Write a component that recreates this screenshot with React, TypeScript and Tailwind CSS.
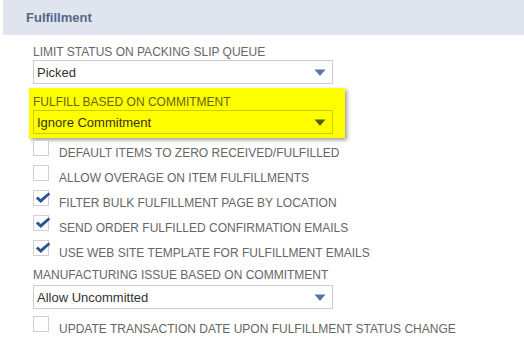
import React from 'react';

const font = { fontFamily: '"Liberation Sans", Arial, sans-serif' };

const checks = [
  { label: 'DEFAULT ITEMS TO ZERO RECEIVED/FULFILLED', checked: false },
  { label: 'ALLOW OVERAGE ON ITEM FULFILLMENTS', checked: false },
  { label: 'FILTER BULK FULFILLMENT PAGE BY LOCATION', checked: true },
  { label: 'SEND ORDER FULFILLED CONFIRMATION EMAILS', checked: true },
  { label: 'USE WEB SITE TEMPLATE FOR FULFILLMENT EMAILS', checked: true },
];

const Arrow: React.FC<{ color: string }> = ({ color }) => (
  <svg width="12" height="7" viewBox="0 0 12 7">
    <path d="M0.5 0.5 L11.5 0.5 L6.6 6.2 Q6 6.8 5.4 6.2 Z" fill={color} />
  </svg>
);

const Select: React.FC<{ value: string; highlight?: boolean }> = ({ value, highlight }) => (
  <div
    className={`flex h-[24px] w-[300px] items-center justify-between border pl-[3px] pr-[6px] text-[13px] leading-[15px] ${
      highlight ? 'border-[#cccc00] text-[#333300]' : 'border-[#cccccc] bg-white text-[#333333]'
    }`}
  >
    <span>{value}</span>
    <Arrow color={highlight ? '#4f6000' : '#5b7398'} />
  </div>
);

const Checkbox: React.FC<{ label: string; checked: boolean }> = ({ label, checked }) => (
  <div className="flex h-[25px] items-start">
    <div className="relative h-[16px] w-[16px] border border-[#d0d0d0] bg-white">
      {checked && (
        <svg className="absolute left-[1px] top-[1px]" width="16" height="12" viewBox="0 0 16 12">
          <path d="M0.8 6.4 L3 4.4 L5.6 7 L13.4 0.4 L15.4 2.2 L5.8 11 Z" fill="#2a5699" />
        </svg>
      )}
    </div>
    <span className="ml-[10px] pt-[6px] text-[12px] leading-[14px] text-[#666666]">{label}</span>
  </div>
);

export default function App() {
  return (
    <div className="h-[342px] w-[524px] overflow-hidden bg-white" style={font}>
      <div className="ml-[3px] flex h-[35px] items-center bg-[#dfe4ee] pl-[23px] pt-[1px]">
        <span className="text-[13px] font-bold text-[#56668a]">Fulfillment</span>
      </div>

      <div className="pl-[33px]">
        <div className="mt-[10px] text-[12px] leading-[14px] text-[#666666]">LIMIT STATUS ON PACKING SLIP QUEUE</div>
        <div className="mt-[1px]">
          <Select value="Picked" />
        </div>

        <div className="-ml-[4px] mt-[4px] w-[316px] bg-[#ffff00] pb-[4px] pl-[4px] pt-[7px] shadow-[2px_2px_4px_rgba(0,0,0,0.4)]">
          <div className="text-[12px] leading-[14px] text-[#666600]">FULFILL BASED ON COMMITMENT</div>
          <div className="mt-[1px]">
            <Select value="Ignore Commitment" highlight />
          </div>
        </div>

        <div className="mt-[2px]">
          {checks.map((c) => (
            <Checkbox key={c.label} label={c.label} checked={c.checked} />
          ))}
        </div>

        <div className="mt-[3px] text-[12px] leading-[14px] text-[#666666]">MANUFACTURING ISSUE BASED ON COMMITMENT</div>
        <div className="mt-[3px]">
          <Select value="Allow Uncommitted" />
        </div>

        <div className="mt-[7px]">
          <Checkbox label="UPDATE TRANSACTION DATE UPON FULFILLMENT STATUS CHANGE" checked={false} />
        </div>
      </div>
    </div>
  );
}
